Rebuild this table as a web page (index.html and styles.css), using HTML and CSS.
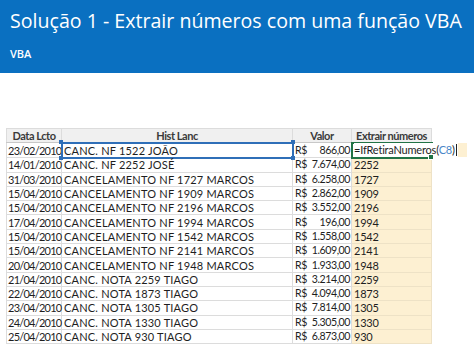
FILE: index.html
```html
<!DOCTYPE html>
<html lang="pt">
<head>
<meta charset="utf-8">
<link rel="stylesheet" href="styles.css">
</head>
<body>
<header class="banner">
  <h1 class="title">Solução 1 - Extrair números com uma função VBA</h1>
  <div class="subtitle">VBA</div>
</header>
<main class="sheet">
  <table class="grid">
    <colgroup>
      <col class="c-date"><col class="c-hist"><col class="c-val"><col class="c-ext">
    </colgroup>
    <thead>
      <tr><th>Data Lcto</th><th>Hist Lanc</th><th>Valor</th><th>Extrair números</th></tr>
    </thead>
    <tbody>
      <tr>
        <td class="date">23/02/2010</td>
        <td class="hist ref">CANC. NF 1522 JOÃO<span class="h tl"></span><span class="h tr"></span><span class="h bl"></span><span class="h br"></span></td>
        <td class="val"><span class="acc"><span>R$</span><span>866,00</span></span></td>
        <td class="ext active"><span class="edit">=IfRetiraNumeros(<span class="refc">C8</span>)<span class="caret"></span><span class="tail"></span></span><span class="fill"></span></td>
      </tr>
      <tr><td class="date">14/01/2010</td><td class="hist">CANC. NF 2252 JOSÉ</td><td class="val"><span class="acc"><span>R$</span><span>7.674,00</span></span></td><td class="ext">2252</td></tr>
      <tr><td class="date">31/03/2010</td><td class="hist">CANCELAMENTO NF 1727 MARCOS</td><td class="val"><span class="acc"><span>R$</span><span>6.258,00</span></span></td><td class="ext">1727</td></tr>
      <tr><td class="date">15/04/2010</td><td class="hist">CANCELAMENTO NF 1909 MARCOS</td><td class="val"><span class="acc"><span>R$</span><span>2.862,00</span></span></td><td class="ext">1909</td></tr>
      <tr><td class="date">15/04/2010</td><td class="hist">CANCELAMENTO NF 2196 MARCOS</td><td class="val"><span class="acc"><span>R$</span><span>3.552,00</span></span></td><td class="ext">2196</td></tr>
      <tr><td class="date">17/04/2010</td><td class="hist">CANCELAMENTO NF 1994 MARCOS</td><td class="val"><span class="acc"><span>R$</span><span>196,00</span></span></td><td class="ext">1994</td></tr>
      <tr><td class="date">15/04/2010</td><td class="hist">CANCELAMENTO NF 1542 MARCOS</td><td class="val"><span class="acc"><span>R$</span><span>1.558,00</span></span></td><td class="ext">1542</td></tr>
      <tr><td class="date">15/04/2010</td><td class="hist">CANCELAMENTO NF 2141 MARCOS</td><td class="val"><span class="acc"><span>R$</span><span>1.609,00</span></span></td><td class="ext">2141</td></tr>
      <tr><td class="date">20/04/2010</td><td class="hist">CANCELAMENTO NF 1948 MARCOS</td><td class="val"><span class="acc"><span>R$</span><span>1.933,00</span></span></td><td class="ext">1948</td></tr>
      <tr><td class="date">21/04/2010</td><td class="hist">CANC. NOTA 2259 TIAGO</td><td class="val"><span class="acc"><span>R$</span><span>3.214,00</span></span></td><td class="ext">2259</td></tr>
      <tr><td class="date">22/04/2010</td><td class="hist">CANC. NOTA 1873 TIAGO</td><td class="val"><span class="acc"><span>R$</span><span>4.094,00</span></span></td><td class="ext">1873</td></tr>
      <tr><td class="date">23/04/2010</td><td class="hist">CANC. NOTA 1305 TIAGO</td><td class="val"><span class="acc"><span>R$</span><span>7.814,00</span></span></td><td class="ext">1305</td></tr>
      <tr><td class="date">24/04/2010</td><td class="hist">CANC. NOTA 1330 TIAGO</td><td class="val"><span class="acc"><span>R$</span><span>5.305,00</span></span></td><td class="ext">1330</td></tr>
      <tr><td class="date">25/04/2010</td><td class="hist">CANC. NOTA 930 TIAGO</td><td class="val"><span class="acc"><span>R$</span><span>6.873,00</span></span></td><td class="ext">930</td></tr>
    </tbody>
  </table>
</main>
</body>
</html>
```
FILE: styles.css
```css
html, body {
  margin: 0;
  padding: 0;
  background: #ffffff;
}
body {
  width: 474px;
  height: 345px;
  overflow: hidden;
}
.banner {
  background: #0a70c1;
  height: 73px;
  box-sizing: border-box;
  padding: 7px 0 0 10px;
  color: #ffffff;
  font-family: "Open Sans", sans-serif;
}
.title {
  margin: 0;
  font-weight: 400;
  font-size: 19.6px;
  line-height: 28px;
  white-space: nowrap;
}
.subtitle {
  margin-top: 12px;
  font-size: 11px;
  font-weight: 600;
  line-height: 14px;
}
.sheet {
  padding: 55px 0 0 6px;
}
.grid {
  border-collapse: collapse;
  table-layout: fixed;
  width: 425px;
  font-family: Lato, "Open Sans", sans-serif;
  font-size: 11px;
  color: #1e1e1e;
}
.c-date { width: 55px; }
.c-hist { width: 231px; }
.c-val { width: 59px; }
.c-ext { width: 80px; }
.grid th, .grid td {
  height: 14.3px;
  padding: 0 2px;
  line-height: 13px;
  border: 1px solid #dcdcdc;
  white-space: nowrap;
  box-sizing: border-box;
  overflow: visible;
}
.grid th {
  background: #f0f0f0;
  font-weight: 700;
  color: #3a3a3a;
  text-align: center;
  letter-spacing: -0.45px;
  border-bottom-color: #c8c8c8;
}
.grid td.date {
  padding-left: 1px;
  letter-spacing: -0.75px;
}
.grid td.hist {
  padding-left: 2px;
  letter-spacing: 0.2px;
  position: relative;
}
.grid td.val {
  padding: 0 1px 0 2px;
  font-size: 10.6px;
  letter-spacing: -0.45px;
}
.acc {
  display: flex;
  justify-content: space-between;
}
.grid td.ext {
  background: #fdf0d2;
  border-color: #eee2c6;
  padding-left: 2px;
  letter-spacing: -0.2px;
}
.grid td.ext.active {
  background: #ffffff;
  position: relative;
  outline: 2px solid #217346;
  outline-offset: -1px;
}
.edit {
  position: relative;
  z-index: 2;
  background: #ffffff;
  padding-right: 1px;
}
.refc { color: #4a86c8; }
.caret {
  display: inline-block;
  width: 1px;
  height: 12px;
  background: #222;
  vertical-align: -2px;
  margin-left: 1px;
}
.tail {
  display: inline-block;
  width: 9px;
  height: 14px;
  background: #fdf0d2;
  vertical-align: -3px;
  margin-left: 1px;
}
.fill {
  position: absolute;
  right: -3px;
  bottom: -3px;
  width: 4px;
  height: 4px;
  background: #217346;
  border: 1px solid #fff;
  z-index: 3;
}
.ref {
  outline: 2px solid #2f6fb8;
  outline-offset: -1px;
}
.h {
  position: absolute;
  width: 4px;
  height: 4px;
  background: #2f6fb8;
}
.h.tl { left: -3px; top: -3px; }
.h.tr { right: -3px; top: -3px; }
.h.bl { left: -3px; bottom: -3px; }
.h.br { right: -3px; bottom: -3px; }
```
